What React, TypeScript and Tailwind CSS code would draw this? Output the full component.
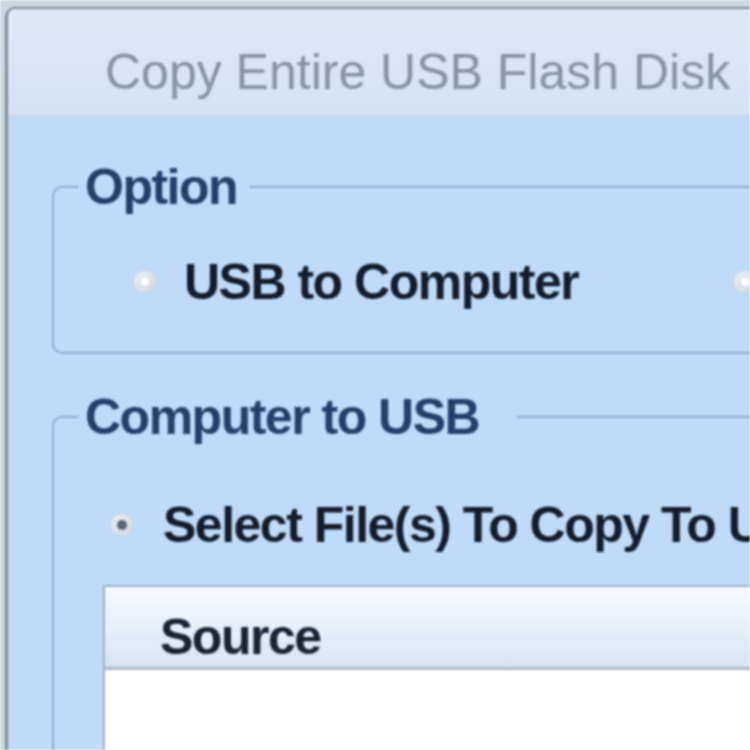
import React from "react";

const font = { fontFamily: '"Liberation Sans", Arial, sans-serif' };

function Radio({ checked }: { checked?: boolean }) {
    return (
        <span className="flex h-[24px] w-[24px] shrink-0 items-center justify-center rounded-full border border-[#c6d0dc] bg-gradient-to-br from-[#eef1f6] to-[#ccd5e0]">
            {checked ? (
                <span className="h-[10px] w-[10px] rounded-full bg-[#5c6574]" />
            ) : (
                <span className="h-[8px] w-[8px] rounded-full bg-white" />
            )}
        </span>
    );
}

export default function App() {
    return (
        <div
            className="h-[750px] w-[750px] overflow-hidden bg-[#cbd8de] pt-[7px] pl-[5px] blur-[0.8px]"
            style={font}
        >
            <div className="h-[800px] w-[800px] rounded-tl-[10px] border-l-[3px] border-t-[2px] border-[#7e8d98] overflow-hidden">
                {/* title bar */}
                <div className="h-[108px] border-b-2 border-[#c7d4e5] bg-gradient-to-b from-[#e1e9f7] to-[#d4e2f8] pt-[38px] pl-[97px]">
                    <span className="whitespace-nowrap text-[50px] leading-none text-[#8693a6]">
                        Copy Entire USB Flash Disk
                    </span>
                </div>

                {/* body */}
                <div className="bg-[#c0dbfa] pt-[45px] pl-[44px] pb-[200px]">
                    <fieldset className="w-[760px] rounded-[10px] border-2 border-[#8eaacb] pt-[45px] pb-[45px] pl-[79px]">
                        <legend className="-ml-[54px] pl-[6px] pr-[12px] text-[50px] font-bold leading-none tracking-[-1.5px] text-[#24406a]">
                            Option
                        </legend>
                        <div className="flex items-center">
                            <Radio />
                            <span className="ml-[27px] whitespace-nowrap text-[50px] font-bold leading-none tracking-[-1.5px] text-[#141c2c]">
                                USB to Computer
                            </span>
                            <span className="ml-[155px]">
                                <Radio />
                            </span>
                        </div>
                    </fieldset>

                    <fieldset className="mt-[38px] w-[760px] rounded-[10px] border-2 border-[#8eaacb] pt-[58px] pl-[56px]">
                        <legend className="-ml-[31px] pl-[6px] pr-[38px] text-[50px] font-bold leading-none tracking-[-1.5px] text-[#24406a]">
                            Computer to USB
                        </legend>
                        <div className="flex items-center">
                            <Radio checked />
                            <span className="ml-[29px] whitespace-nowrap text-[50px] font-bold leading-none tracking-[-1.5px] text-[#141c2c]">
                                Select File(s) To Copy To USB
                            </span>
                        </div>

                        <div className="-ml-[7px] mt-[35px] w-[700px] border-2 border-[#9cb1c6] bg-white">
                            <div className="h-[83px] border-b-[3px] border-[#a9b8c8] bg-gradient-to-b from-[#f7fbff] to-[#d9e4f1] pt-[25px] pl-[55px]">
                                <span className="text-[50px] font-bold leading-none tracking-[-1.5px] text-[#1a2231]">
                                    Source
                                </span>
                            </div>
                            <div className="h-[300px] bg-white" />
                        </div>
                    </fieldset>
                </div>
            </div>
        </div>
    );
}
